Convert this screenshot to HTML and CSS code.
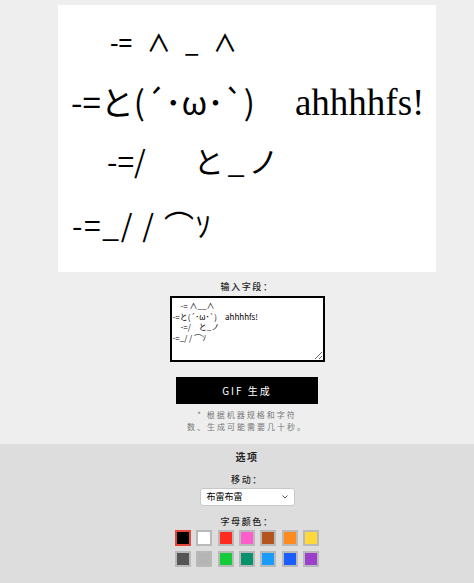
FILE: index.html
```html
<!DOCTYPE html>
<html>
<head>
<meta charset="utf-8">
<link rel="stylesheet" href="styles.css">
</head>
<body>
<section class="top">
  <div class="canvas">
    <div class="ln ln1">-= ∧ _ ∧</div>
    <div class="ln ln2">-=と(´･ω･`)<span class="serif">ahhhhfs!</span></div>
    <div class="ln ln3">-=/<span class="gap"></span><span class="wide">と_ノ</span></div>
    <div class="ln ln4">-=_/ / ⌒ｿ</div>
  </div>
  <label class="lbl" for="src">输入字段：</label>
  <textarea id="src" class="src">　-= ∧__∧
-=と(´･ω･`)　ahhhhfs!
　-=/　と_ノ
-=_/ / ⌒ｿ</textarea>
  <button class="gen">GIF 生成</button>
  <p class="note">* 根据机器规格和字符<br>数、生成可能需要几十秒。</p>
</section>
<section class="opts">
  <h2 class="opt-title">选项</h2>
  <div class="lbl">移动：</div>
  <div class="sel">布雷布雷<svg class="chev" width="8" height="6" viewBox="0 0 8 6"><path d="M1.5 1.5 L4 4 L6.5 1.5" fill="none" stroke="#555" stroke-width="1"/></svg></div>
  <div class="lbl lbl2">字母颜色：</div>
  <div class="swatches">
    <span class="sw on" style="background:#000"></span>
    <span class="sw" style="background:#fff"></span>
    <span class="sw" style="background:#ff2a1f"></span>
    <span class="sw" style="background:#ff5ccc"></span>
    <span class="sw" style="background:#b4541e"></span>
    <span class="sw" style="background:#ff8a1f"></span>
    <span class="sw" style="background:#ffd83a"></span>
    <span class="sw" style="background:#555555"></span>
    <span class="sw" style="background:#b5b5b5"></span>
    <span class="sw" style="background:#14cc3a"></span>
    <span class="sw" style="background:#08916a"></span>
    <span class="sw" style="background:#1a9cff"></span>
    <span class="sw" style="background:#1b5cff"></span>
    <span class="sw" style="background:#9c3fcc"></span>
  </div>
</section>
</body>
</html>
```
FILE: styles.css
```css
html, body {
  margin: 0;
  padding: 0;
}
body {
  background: #eeeeee;
  font-family: "Noto Sans CJK SC", "Noto Sans", sans-serif;
  color: #222;
  width: 474px;
  overflow: hidden;
}
.top {
  display: flex;
  flex-direction: column;
  align-items: center;
  padding: 5px 0 0 20px;
  height: 439px;
  box-sizing: border-box;
}
.canvas {
  width: 378px;
  height: 267px;
  background: #fff;
  display: flex;
  flex-direction: column;
  font-family: "Noto Sans CJK JP", sans-serif;
  color: #000;
  box-sizing: border-box;
}
.ln {
  white-space: pre;
  line-height: 1;
}
.ln1 {
  font-size: 24px;
  font-weight: 500;
  word-spacing: 9px;
  padding: 25px 0 0 52px;
  height: 32px;
}
.ln2 {
  font-size: 33px;
  padding: 22px 0 0 13px;
  height: 38px;
}
.serif {
  font-family: "Liberation Serif", serif;
  font-size: 37px;
  margin-left: 40px;
}
.ln3 {
  font-size: 30px;
  padding: 23px 0 0 49px;
  height: 32px;
}
.gap {
  display: inline-block;
  width: 48px;
}
.wide {
  letter-spacing: 4px;
}
.ln4 {
  font-size: 30px;
  letter-spacing: 1.6px;
  padding: 32px 0 0 14px;
  height: 32px;
}
.lbl {
  font-size: 9px;
  letter-spacing: 1.6px;
  color: #222;
  margin-top: 9px;
  line-height: 12px;
  font-weight: 500;
}
.src {
  width: 155px;
  height: 66px;
  box-sizing: border-box;
  border: 2px solid #000;
  margin: 3px 0 0;
  padding: 3px 1px;
  font-family: "Noto Sans CJK JP", sans-serif;
  font-size: 8px;
  line-height: 10.5px;
  resize: vertical;
  background: #fff;
  color: #000;
  white-space: pre;
  overflow: hidden;
}
.gen {
  margin-top: 15px;
  width: 142px;
  height: 27px;
  background: #000;
  color: #fff;
  border: 0;
  font-family: "Noto Sans CJK SC", sans-serif;
  font-size: 10px;
  letter-spacing: 2px;
  padding: 0;
}
.note {
  margin: 5px 0 0;
  font-size: 8px;
  line-height: 12px;
  letter-spacing: 2px;
  color: #777;
  text-align: center;
}
.opts {
  background: #dddddd;
  height: 144px;
  display: flex;
  flex-direction: column;
  align-items: center;
  padding: 6px 0 0 20px;
  box-sizing: border-box;
  margin-top: 5px;
}
.opt-title {
  margin: 0;
  font-size: 10px;
  font-weight: 700;
  letter-spacing: 1.5px;
  line-height: 14px;
}
.opts .lbl {
  margin-top: 10px;
}
.sel {
  margin-top: 2px;
  width: 95px;
  height: 18px;
  box-sizing: border-box;
  background: #fff;
  border: 1px solid #c8c8c8;
  border-radius: 3px;
  font-size: 9px;
  line-height: 16px;
  padding-left: 6px;
  display: flex;
  align-items: center;
  justify-content: space-between;
  padding-right: 5px;
  color: #000;
}
.opts .lbl2 {
  margin-top: 10px;
}
.swatches {
  margin-top: 2px;
  display: grid;
  grid-template-columns: repeat(7, 16px);
  column-gap: 5.3px;
  row-gap: 5px;
}
.sw {
  width: 16px;
  height: 16px;
  box-sizing: border-box;
  border: 2px solid #b9b9b9;
  display: block;
}
.sw.on {
  border-color: #e8453a;
}
```
